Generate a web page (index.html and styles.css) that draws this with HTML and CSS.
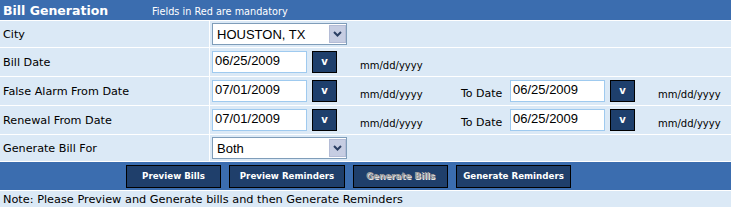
FILE: index.html
```html
<!DOCTYPE html>
<html lang="en">
  <head>
    <meta charset="UTF-8" />
    <title>Bill Generation</title>
    <link rel="stylesheet" href="styles.css">
  </head>
  <body>
    <div class="panel">
      <div class="title-bar">
        <span class="title">Bill Generation</span>
        <span class="title-note">Fields in Red are mandatory</span>
      </div>
      <div class="form-grid">
        <div class="label">City</div>
        <div class="value">
          <div class="select-box">
            <select class="select"><option>HOUSTON, TX</option></select>
            <span class="select-arrow">
              <svg width="9" height="6" viewBox="0 0 9 6"><polyline points="1,1 4.5,4.5 8,1" fill="none" stroke="#2b3f63" stroke-width="2"/></svg>
            </span>
          </div>
        </div>

        <div class="label">Bill Date</div>
        <div class="value">
          <input class="date-input" type="text" value="06/25/2009" />
          <button class="cal-button">v</button>
          <span class="hint">mm/dd/yyyy</span>
        </div>

        <div class="label">False Alarm From Date</div>
        <div class="value">
          <input class="date-input" type="text" value="07/01/2009" />
          <button class="cal-button">v</button>
          <span class="hint">mm/dd/yyyy</span>
          <span class="to-label">To Date</span>
          <input class="date-input" type="text" value="06/25/2009" />
          <button class="cal-button">v</button>
          <span class="hint">mm/dd/yyyy</span>
        </div>

        <div class="label">Renewal From Date</div>
        <div class="value">
          <input class="date-input" type="text" value="07/01/2009" />
          <button class="cal-button">v</button>
          <span class="hint">mm/dd/yyyy</span>
          <span class="to-label">To Date</span>
          <input class="date-input" type="text" value="06/25/2009" />
          <button class="cal-button">v</button>
          <span class="hint">mm/dd/yyyy</span>
        </div>

        <div class="label">Generate Bill For</div>
        <div class="value">
          <div class="select-box">
            <select class="select"><option>Both</option></select>
            <span class="select-arrow">
              <svg width="9" height="6" viewBox="0 0 9 6"><polyline points="1,1 4.5,4.5 8,1" fill="none" stroke="#2b3f63" stroke-width="2"/></svg>
            </span>
          </div>
        </div>
      </div>
      <div class="actions">
        <button class="action-button preview-bills">Preview Bills</button>
        <button class="action-button preview-reminders">Preview Reminders</button>
        <button class="action-button generate-bills" disabled>Generate Bills</button>
        <button class="action-button generate-reminders">Generate Reminders</button>
      </div>
      <div class="note">Note: Please Preview and Generate bills and then Generate Reminders</div>
    </div>
  </body>
</html>
```

FILE: styles.css
```css
* {
  padding: 0;
  margin: 0;
  box-sizing: border-box;
}
body {
  background: #ffffff;
  font-family: "DejaVu Sans", Verdana, sans-serif;
  color: #000;
}
.panel {
  width: 731px;
  display: flex;
  flex-direction: column;
  gap: 1px;
  background: #ffffff;
}

.title-bar {
  height: 20px;
  padding: 1px 0 0 3px;
  background: #3b6daf;
  color: #fff;
  display: flex;
  align-items: baseline;
}
.title {
  width: 149px;
  font-weight: bold;
  font-size: 12.5px;
  line-height: 19px;
}
.title-note {
  font-size: 9.7px;
}

.form-grid {
  display: grid;
  grid-template-columns: 209px 1fr;
  grid-template-rows: 26px 28px 28px 28px 26px;
  gap: 1px;
}
.label,
.value {
  background: #dbe9f6;
  display: flex;
  align-items: center;
}
.label {
  padding-left: 3px;
  font-size: 11.2px;
}
.value {
  padding-left: 2px;
}

.select-box {
  position: relative;
  width: 135px;
  height: 22px;
}
.select {
  appearance: none;
  -webkit-appearance: none;
  width: 100%;
  height: 100%;
  border: 1px solid #7f9db9;
  background: #fff;
  padding-left: 4px;
  font-family: "Liberation Sans", Arial, sans-serif;
  font-size: 13px;
  color: #000;
  outline: none;
}
.select-arrow {
  position: absolute;
  top: 2px;
  right: 1px;
  width: 17px;
  height: 18px;
  background: #c6cde2;
  border: 1px solid #b4bcd6;
  display: flex;
  align-items: center;
  justify-content: center;
}

.date-input {
  width: 95px;
  height: 22px;
  border: 1px solid #9fcaef;
  padding: 0 2px 4px 2px;
  font-family: "Liberation Sans", Arial, sans-serif;
  font-size: 13px;
  color: #000;
  background: #fff;
  outline: none;
}
.cal-button {
  width: 25px;
  height: 22px;
  margin-left: 5px;
  background: #1e3f6c;
  border: 1px solid #000;
  color: #fff;
  font-family: "DejaVu Sans", Verdana, sans-serif;
  font-weight: bold;
  font-size: 10px;
  line-height: 16px;
}
.hint {
  align-self: flex-end;
  width: 101px;
  margin-left: 23px;
  margin-bottom: 4px;
  font-size: 10px;
  line-height: 12px;
}
.to-label {
  align-self: flex-end;
  width: 49px;
  margin-bottom: 5px;
  font-size: 11px;
  line-height: 13px;
}

.actions {
  height: 28px;
  background: #3b6daf;
  display: flex;
  align-items: center;
  gap: 8px;
  padding-left: 126px;
}
.action-button {
  height: 23px;
  background: #1f3f6b;
  border: 1px solid #000;
  color: #fff;
  font-family: "DejaVu Sans", Verdana, sans-serif;
  font-weight: bold;
  font-size: 8.7px;
}
.preview-bills,
.generate-bills {
  width: 95px;
}
.preview-reminders {
  width: 116px;
}
.generate-reminders {
  width: 115px;
}
.generate-bills {
  color: #9c9c9c;
  text-shadow: 1px 1px 0 #e6e6e6;
}

.note {
  height: 16px;
  padding: 1px 0 0 3px;
  background: #dbe9f6;
  font-size: 11.3px;
  line-height: 16px;
}
```
